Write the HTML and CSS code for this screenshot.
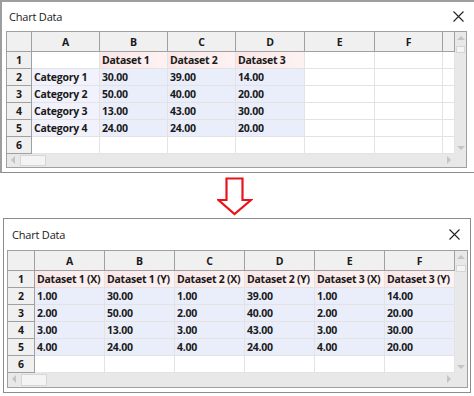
FILE: index.html
```html
<!DOCTYPE html>
<html lang="en">
<head>
    <meta charset="UTF-8">
    <meta name="viewport" content="width=device-width, initial-scale=1.0">
    <title>Chart Data</title>
    <link rel="stylesheet" href="styles.css">
</head>
<body>
    <div class="window window-top">
        <div class="titlebar">
            <span class="title">Chart Data</span>
            <svg class="close" width="11" height="11" viewBox="0 0 11 11"><path d="M0.5 0.5 L10.5 10.5 M10.5 0.5 L0.5 10.5" stroke="#222" stroke-width="1.1" fill="none"/></svg>
        </div>
        <div class="sheet sheet-top" id="sheet-top"></div>
    </div>

    <div class="arrow-row">
        <svg width="36" height="39" viewBox="0 0 36 39">
            <polygon points="9.5,1.5 25.5,1.5 25.5,23 34,23 17.5,37 1.5,23 9.5,23" fill="#fff" stroke="#e8141b" stroke-width="2.2" stroke-linejoin="miter"/>
        </svg>
    </div>

    <div class="window window-bottom">
        <div class="titlebar">
            <span class="title">Chart Data</span>
            <svg class="close" width="11" height="11" viewBox="0 0 11 11"><path d="M0.5 0.5 L10.5 10.5 M10.5 0.5 L0.5 10.5" stroke="#222" stroke-width="1.1" fill="none"/></svg>
        </div>
        <div class="sheet sheet-bottom" id="sheet-bottom"></div>
    </div>

    <script>
        document.addEventListener("DOMContentLoaded", function () {
            const letters = ["A", "B", "C", "D", "E", "F"];

            const topData = [
                ["", "Dataset 1", "Dataset 2", "Dataset 3"],
                ["Category 1", "30.00", "39.00", "14.00"],
                ["Category 2", "50.00", "40.00", "20.00"],
                ["Category 3", "13.00", "43.00", "30.00"],
                ["Category 4", "24.00", "24.00", "20.00"]
            ];

            const bottomData = [
                ["Dataset 1 (X)", "Dataset 1 (Y)", "Dataset 2 (X)", "Dataset 2 (Y)", "Dataset 3 (X)", "Dataset 3 (Y)"],
                ["1.00", "30.00", "1.00", "39.00", "1.00", "14.00"],
                ["2.00", "50.00", "2.00", "40.00", "2.00", "20.00"],
                ["3.00", "13.00", "3.00", "43.00", "3.00", "30.00"],
                ["4.00", "24.00", "4.00", "24.00", "4.00", "20.00"]
            ];

            function addCell(sheet, cls, text) {
                const cell = document.createElement("div");
                cell.className = cls;
                cell.textContent = text || "";
                sheet.appendChild(cell);
            }

            function buildSheet(sheet, data, hasCategories, partialCol) {
                // scrollbars first, they have fixed grid places
                sheet.innerHTML = `
                    <div class="vscroll"><span class="arr up"></span><span class="thumb"></span><span class="arr down"></span></div>
                    <div class="hscroll"><span class="arr left"></span><span class="thumb"></span><span class="arr right"></span></div>
                    <div class="corner"></div>`;

                addCell(sheet, "hd corner-hd", "");
                letters.forEach(l => addCell(sheet, "hd", l));
                if (partialCol) addCell(sheet, "hd", "");

                for (let r = 0; r < 6; r++) {
                    addCell(sheet, "rh", r + 1);
                    for (let c = 0; c < 6; c++) {
                        let text = data[r] ? data[r][c] : "";
                        let cls = "cell";
                        if (data[r] && c < data[r].length) {
                            if (r === 0) {
                                cls += text ? " pink" : "";
                            } else if (hasCategories && c === 0) {
                                cls += " cat";
                            } else {
                                cls += " blue";
                            }
                        }
                        addCell(sheet, cls, text);
                    }
                    if (partialCol) addCell(sheet, "cell", "");
                }
            }

            buildSheet(document.getElementById("sheet-top"), topData, true, true);
            buildSheet(document.getElementById("sheet-bottom"), bottomData, false, false);
        });
    </script>
</body>
</html>
```

FILE: styles.css
```css
* {
    box-sizing: border-box;
}

body {
    margin: 0;
    width: 474px;
    height: 396px;
    background-color: #fff;
    font-family: "Open Sans", "Noto Sans", sans-serif;
    color: #1a1a1a;
    overflow: hidden;
}

.window {
    background-color: #fff;
}

.window-top {
    height: 173px;
    border-top: 2px solid #9e9e9e;
    border-left: 2px solid #9e9e9e;
    border-bottom: 1px solid #8c8c8c;
    padding-left: 4px;
}

.window-bottom {
    height: 175px;
    margin: 0 3px;
    border: 1px solid #8c8c8c;
    padding-left: 3px;
}

.titlebar {
    display: flex;
    align-items: center;
    justify-content: space-between;
    height: 29px;
    padding-left: 3px;
    padding-right: 10px;
}

.window-bottom .titlebar {
    height: 31px;
    padding-left: 5px;
    padding-right: 10px;
}

.title {
    font-size: 11px;
    letter-spacing: -0.2px;
}

.close {
    display: block;
}

.arrow-row {
    height: 45px;
    display: flex;
    justify-content: center;
    padding-top: 4px;
    padding-right: 4px;
}

/* Spreadsheet grid */
.sheet {
    display: grid;
    border: 1px solid #a0a0a0;
    font-size: 10.5px;
    font-weight: bold;
    letter-spacing: -0.25px;
}

.sheet-top {
    width: 461px;
    grid-template-columns: 25px 68px 68px 68px 69px 70px 68px 12px 11px;
    grid-template-rows: 20px repeat(6, 17px) 13px;
}

.sheet-bottom {
    width: 461px;
    grid-template-columns: 27px repeat(6, 70px) 12px;
    grid-template-rows: 20px repeat(6, 17px) 14px;
}

.hd,
.rh {
    background-color: #f0f0f0;
    border-right: 1px solid #a0a0a0;
    border-bottom: 1px solid #a0a0a0;
    display: flex;
    align-items: center;
    justify-content: center;
}

.cell {
    border-right: 1px solid #e3e3e3;
    border-bottom: 1px solid #e3e3e3;
    padding-left: 2px;
    display: flex;
    align-items: center;
    white-space: nowrap;
    overflow: hidden;
}

.cell.pink {
    background: linear-gradient(to right, #fbe6e7, #fdf2f2);
}

.cell.blue {
    background-color: #e9eefa;
}

.cell.cat {
    background-color: #f1f2fb;
}

/* Scrollbars */
.vscroll {
    grid-column: -2;
    grid-row: 1 / 8;
    background-color: #e8e8e8;
    position: relative;
}

.hscroll {
    grid-column: 1 / -2;
    grid-row: 8;
    background-color: #e8e8e8;
    position: relative;
}

.corner {
    grid-column: -2;
    grid-row: 8;
    background-color: #e8e8e8;
}

.arr {
    position: absolute;
    width: 0;
    height: 0;
}

.arr.up {
    top: 4px;
    left: 2px;
    border-left: 4px solid transparent;
    border-right: 4px solid transparent;
    border-bottom: 4px solid #c4c4c4;
}

.arr.down {
    bottom: 4px;
    left: 2px;
    border-left: 4px solid transparent;
    border-right: 4px solid transparent;
    border-top: 4px solid #c4c4c4;
}

.arr.left {
    top: 2px;
    left: 4px;
    border-top: 4px solid transparent;
    border-bottom: 4px solid transparent;
    border-right: 4px solid #c4c4c4;
}

.arr.right {
    top: 2px;
    right: 4px;
    border-top: 4px solid transparent;
    border-bottom: 4px solid transparent;
    border-left: 4px solid #c4c4c4;
}

.vscroll .thumb {
    position: absolute;
    top: 14px;
    left: 1px;
    right: 1px;
    height: 7px;
    background-color: #f4f4f4;
    border: 1px solid #d6d6d6;
}

.hscroll .thumb {
    position: absolute;
    left: 13px;
    top: 1px;
    bottom: 1px;
    width: 26px;
    background-color: #f4f4f4;
    border: 1px solid #d6d6d6;
}
```
